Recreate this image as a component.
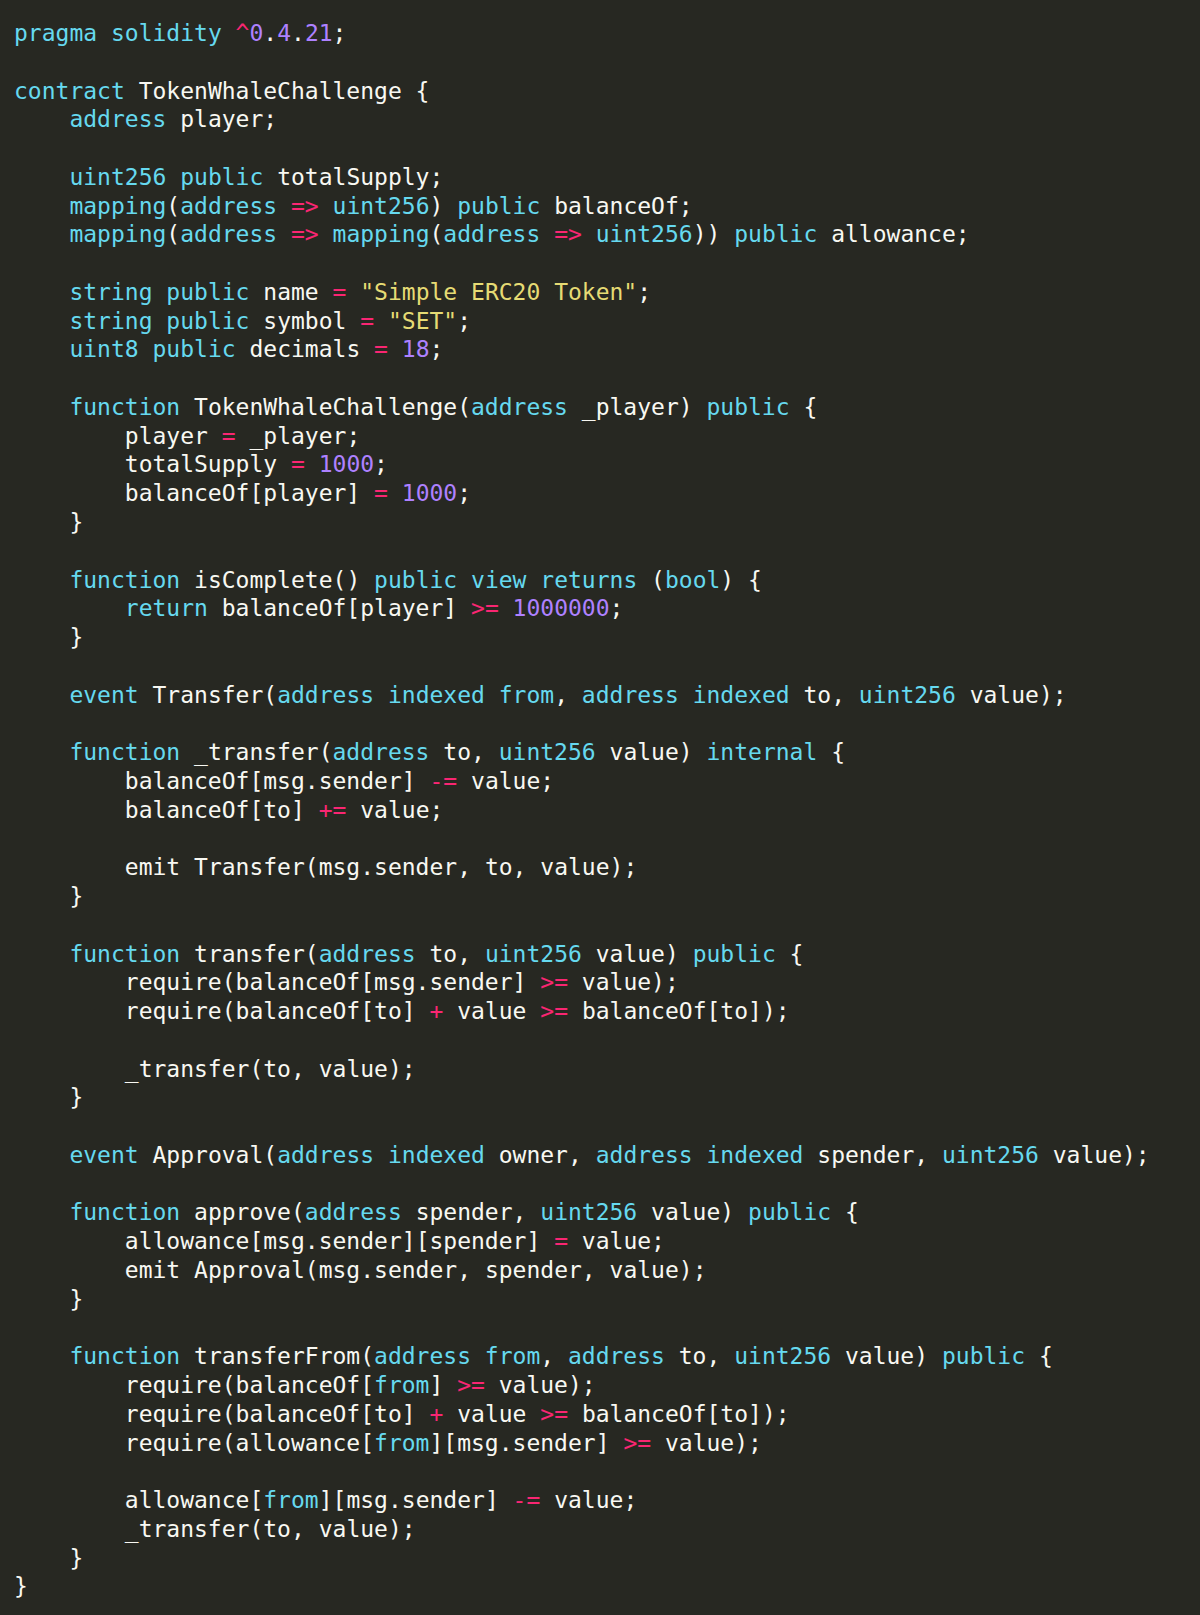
import React from "react";

const CODE = `pragma solidity ^0.4.21;

contract TokenWhaleChallenge {
    address player;

    uint256 public totalSupply;
    mapping(address => uint256) public balanceOf;
    mapping(address => mapping(address => uint256)) public allowance;

    string public name = "Simple ERC20 Token";
    string public symbol = "SET";
    uint8 public decimals = 18;

    function TokenWhaleChallenge(address _player) public {
        player = _player;
        totalSupply = 1000;
        balanceOf[player] = 1000;
    }

    function isComplete() public view returns (bool) {
        return balanceOf[player] >= 1000000;
    }

    event Transfer(address indexed from, address indexed to, uint256 value);

    function _transfer(address to, uint256 value) internal {
        balanceOf[msg.sender] -= value;
        balanceOf[to] += value;

        emit Transfer(msg.sender, to, value);
    }

    function transfer(address to, uint256 value) public {
        require(balanceOf[msg.sender] >= value);
        require(balanceOf[to] + value >= balanceOf[to]);

        _transfer(to, value);
    }

    event Approval(address indexed owner, address indexed spender, uint256 value);

    function approve(address spender, uint256 value) public {
        allowance[msg.sender][spender] = value;
        emit Approval(msg.sender, spender, value);
    }

    function transferFrom(address from, address to, uint256 value) public {
        require(balanceOf[from] >= value);
        require(balanceOf[to] + value >= balanceOf[to]);
        require(allowance[from][msg.sender] >= value);

        allowance[from][msg.sender] -= value;
        _transfer(to, value);
    }
}`;

const KEYWORDS = new Set([
  "pragma", "solidity", "contract", "address", "uint256", "uint8", "public",
  "mapping", "string", "function", "view", "returns", "bool", "return",
  "event", "indexed", "from", "internal",
]);

const COLORS = {
  kw: "text-[#66d9ef]",
  op: "text-[#f92672]",
  num: "text-[#ae81ff]",
  str: "text-[#e6db74]",
  plain: "text-[#f8f8f2]",
};

// rough tokenizer, good enough for this snippet
function tokenize(line) {
  const re = /("[^"]*")|(=>|>=|-=|\+=|[=+^])|(\b\d+\b)|([A-Za-z_][A-Za-z0-9_]*)|(\s+|.)/g;
  const out = [];
  let m;
  while ((m = re.exec(line))) {
    if (m[1]) out.push(["str", m[1]]);
    else if (m[2]) out.push(["op", m[2]]);
    else if (m[3]) out.push(["num", m[3]]);
    else if (m[4]) out.push([KEYWORDS.has(m[4]) ? "kw" : "plain", m[4]]);
    else out.push(["plain", m[5]]);
  }
  return out;
}

export default function App() {
  const lines = CODE.split("\n");
  return (
    <div className="w-full h-[1615px] bg-[#272822] overflow-hidden">
      <pre className="pt-[19px] pl-[14px] font-['DejaVu_Sans_Mono',monospace] text-[23px] leading-[28.78px] text-[#f8f8f2] whitespace-pre">
        {lines.map((line, i) => (
          <div key={i} className="h-[28.78px]">
            {tokenize(line).map(([type, text], j) => (
              <span key={j} className={COLORS[type]}>
                {text}
              </span>
            ))}
          </div>
        ))}
      </pre>
    </div>
  );
}
